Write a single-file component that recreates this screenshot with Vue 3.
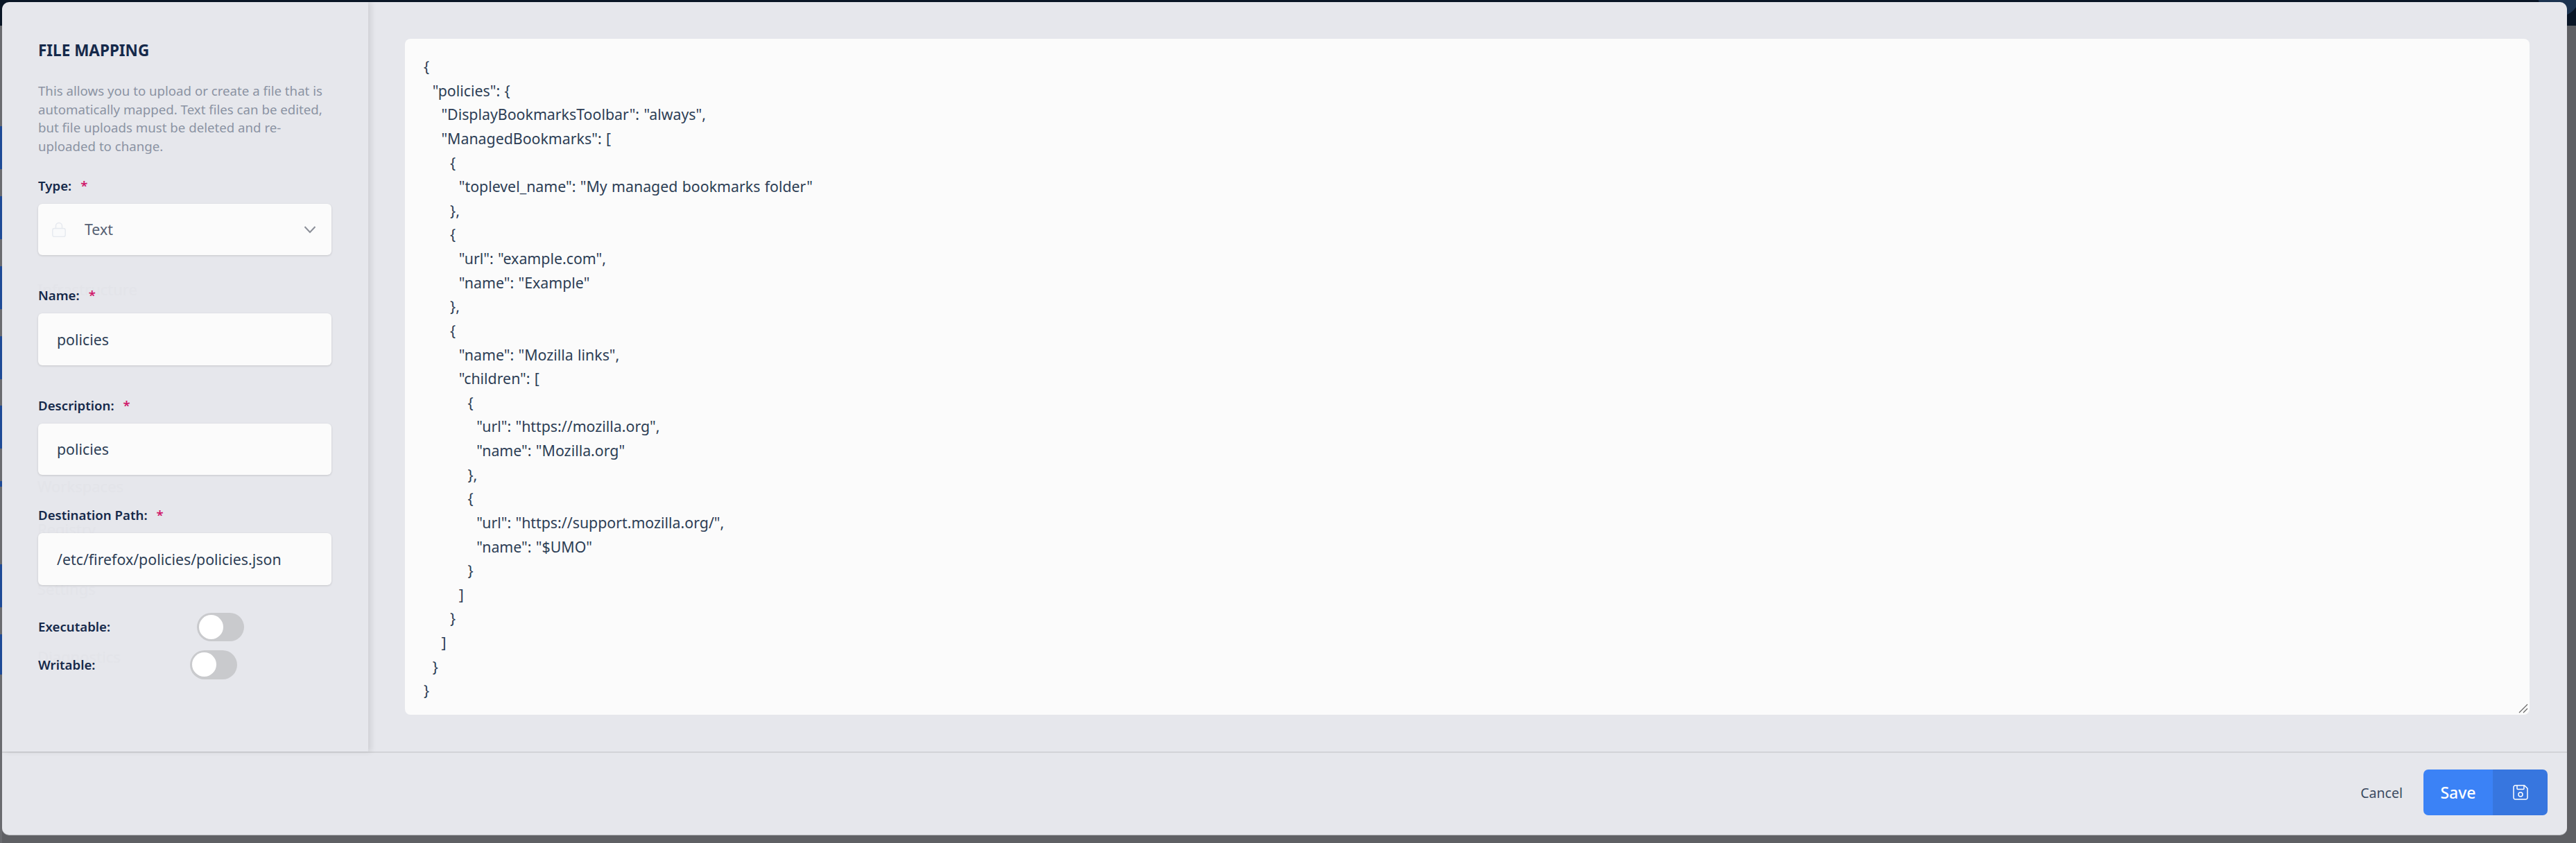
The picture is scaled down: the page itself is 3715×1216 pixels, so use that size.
<script setup>
const code = `{
  "policies": {
    "DisplayBookmarksToolbar": "always",
    "ManagedBookmarks": [
      {
        "toplevel_name": "My managed bookmarks folder"
      },
      {
        "url": "example.com",
        "name": "Example"
      },
      {
        "name": "Mozilla links",
        "children": [
          {
            "url": "https://mozilla.org",
            "name": "Mozilla.org"
          },
          {
            "url": "https://support.mozilla.org/",
            "name": "$UMO"
          }
        ]
      }
    ]
  }
}`
const ghosts = [
  { label: 'Infrastructure', top: 399 },
  { label: 'Workspaces', top: 683 },
  { label: 'Registry', top: 745 },
  { label: 'Settings', top: 831 },
  { label: 'Diagnostics', top: 929 }
]
</script>

<template>
  <div class="page">
    <div class="modal">
      <div class="body">
        <aside class="side">
          <span v-for="g in ghosts" :key="g.label" class="ghost" :style="{ top: g.top + 'px' }">{{ g.label }}</span>
          <h2 class="title">FILE MAPPING</h2>
          <p class="desc">This allows you to upload or create a file that is automatically mapped. Text files can be edited, but file uploads must be deleted and re-uploaded to change.</p>
          <div class="field first">
            <label class="lab">Type:<span class="req">*</span></label>
            <div class="box select">
              <svg class="lock" viewBox="0 0 20 22" width="20" height="22"><path d="M5.500 9.500V6a4.500 4.500 0 0 1 9 0v3.500" fill="none" stroke="#e6e9ef" stroke-width="1.500"/><rect x="0.800" y="9.500" width="18.400" height="12" rx="2.500" fill="#f9fafb" stroke="#e6e9ef" stroke-width="1.400"/></svg>
              <span class="seltext">Text</span>
              <svg class="chev" viewBox="0 0 18 12" width="18" height="12"><path d="M1.500 2l7.500 8 7.500-8" fill="none" stroke="#8b8f98" stroke-width="2"/></svg>
            </div>
          </div>
          <div class="field">
            <label class="lab">Name:<span class="req">*</span></label>
            <div class="box">policies</div>
          </div>
          <div class="field">
            <label class="lab">Description:<span class="req">*</span></label>
            <div class="box">policies</div>
          </div>
          <div class="field">
            <label class="lab">Destination Path:<span class="req">*</span></label>
            <div class="box">/etc/firefox/policies/policies.json</div>
          </div>
          <div class="togrow r1"><span class="lab">Executable:</span><span class="toggle"><i></i></span></div>
          <div class="togrow r2"><span class="lab">Writable:</span><span class="toggle"><i></i></span></div>
        </aside>
        <main class="main">
          <div class="area"><pre class="code">{{ code }}</pre>
            <svg class="grip" viewBox="0 0 14 14" width="14" height="14"><path d="M1 13L13 1M7 13l6-6" stroke="#666" stroke-width="1.200" fill="none"/></svg>
          </div>
        </main>
      </div>
      <footer class="foot">
        <span class="cancel">Cancel</span>
        <div class="save">
          <span class="savet">Save</span>
          <span class="savei">
            <svg viewBox="0 0 22 22" width="22" height="22" fill="none" stroke="#fff" stroke-width="1.500" stroke-linejoin="round"><path d="M3.500 1h13.200L21 5.200V18.500a2.500 2.500 0 0 1-2.500 2.500h-15A2.500 2.500 0 0 1 1 18.500v-15A2.500 2.500 0 0 1 3.500 1z"/><path d="M6 1v4.500a1 1 0 0 0 1 1h8a1 1 0 0 0 1-1V1"/><circle cx="11" cy="14" r="3"/></svg>
          </span>
        </div>
      </footer>
    </div>
  </div>
</template>

<style>
html, body { margin: 0; }
</style>

<style scoped>
.page {
  width: 3715px; height: 1216px; box-sizing: border-box; overflow: hidden;
  padding: 3px 13px 12px 3px;
  background:
    linear-gradient(#0a1626 0 37px, #6a6b6f 37px 182px, #1e4a96 182px 244px, #6a6b6f 244px 283px, #1e4a96 283px 345px, #6a6b6f 345px 384px, #1e4a96 384px 446px, #6a6b6f 446px 485px, #1e4a96 485px 547px, #6a6b6f 547px 585px, #1e4a96 585px 647px, #6a6b6f 647px 694px, #1e4a96 694px 702px, #6a6b6f 702px 814px, #1e4a96 814px 876px, #6a6b6f 876px 915px, #1e4a96 915px 973px, #6a6b6f 973px) left top / 3px 100% no-repeat,
    radial-gradient(circle 30px at 3690px -6px, #1c3350 98%, transparent),
    linear-gradient(#0a1626 0 37px, #5f6064 37px);
  font-family: "Noto Sans", "Open Sans", sans-serif;
  font-stretch: 85%;
  color: #1e3148;
}
.modal { height: 100%; background: #e6e7ec; border-radius: 10px; display: flex; flex-direction: column; overflow: hidden; box-shadow: 0 1px 0 #b9babe; }
.body { flex: 1; display: flex; min-height: 0; }
.side { position: relative; width: 528px; box-sizing: border-box; padding: 56px 53px 0 52px; box-shadow: 4px 0 8px rgba(0,0,0,.1); flex: none; }
.side > *:not(.ghost) { position: relative; }
.ghost { position: absolute; left: 51px; font-size: 22px; line-height: 30px; color: #e3e4e9; }
.title { margin: 0; font-size: 22.500px; line-height: 28px; font-weight: 700; color: #15294a; }
.desc { margin: 31px 0 0; font-size: 18.670px; line-height: 26.670px; color: #8b93a3; }
.field { margin-top: 45px; }
.field.first { margin-top: 30px; }
.lab { font-size: 18.670px; line-height: 26px; font-weight: 600; font-stretch: 95%; color: #15294a; display: block; }
.req { color: #d01c6c; margin-left: 13px; }
.box { margin-top: 13px; height: 74.500px; box-sizing: border-box; padding: 0 27px; background: #fbfbfb; border-radius: 6px; box-shadow: 0 1px 3px rgba(0,0,0,.15); display: flex; align-items: center; font-size: 21.330px; font-stretch: 87%; color: #2d3e55; }
.select { padding: 0 22px 0 20px; color: #566173; }
.seltext { margin-left: 27px; flex: 1; }
.togrow { display: flex; align-items: center; }
.togrow.r1 { margin-top: 40px; }
.togrow.r2 { margin-top: 13px; }
.r1 .lab { width: 229px; }
.r2 .lab { width: 219px; }
.toggle { width: 68px; height: 41px; border-radius: 21px; background: #c9cacd; box-sizing: border-box; padding: 3px; display: block; }
.r2 .toggle { height: 42px; }
.toggle i { display: block; width: 35px; height: 35px; border-radius: 50%; background: #fff; }
.main { flex: 1; padding: 53px 54px 53px 53px; box-sizing: border-box; display: flex; min-width: 0; }
.area { flex: 1; background: #fbfbfb; border-radius: 8px; position: relative; padding: 23px 27px; box-sizing: border-box; }
.code { margin: 0; font-family: inherit; font-size: 21.330px; line-height: 34.620px; font-stretch: 86.500%; word-spacing: .8px; color: #2d3e55; }
.grip { position: absolute; right: 2px; bottom: 2px; }
.foot { height: 120px; flex: none; border-top: 2px solid #d2d3d7; box-sizing: border-box; display: flex; align-items: center; justify-content: flex-end; padding: 0 28px 4px 0; }
.cancel { font-size: 19.500px; font-stretch: 82%; color: #3b4a60; margin-right: 30px; }
.save { display: flex; width: 179px; height: 66px; border-radius: 7px; overflow: hidden; color: #fff; }
.savet { width: 100px; background: #3b82f6; display: flex; align-items: center; justify-content: center; font-size: 23px; font-weight: 500; }
.savei { flex: 1; background: #3776df; display: flex; align-items: center; justify-content: center; }
</style>
